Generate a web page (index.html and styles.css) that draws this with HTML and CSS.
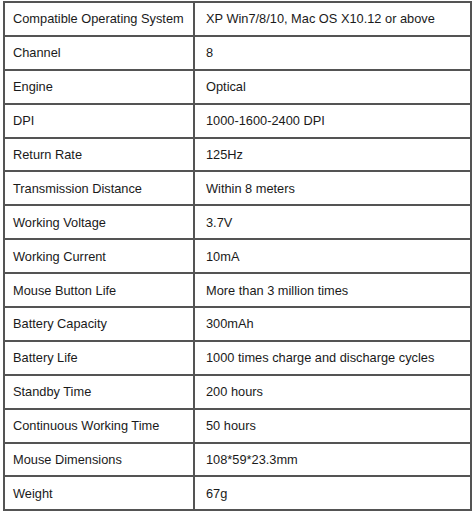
FILE: index.html
```html
<!DOCTYPE html>
<html>
<head>
<meta charset="utf-8">
<link rel="stylesheet" href="styles.css">
</head>
<body>
<div class="specs">
  <div class="cell key">Compatible Operating System</div><div class="cell val">XP Win7/8/10, Mac OS X10.12 or above</div>
  <div class="cell key">Channel</div><div class="cell val">8</div>
  <div class="cell key">Engine</div><div class="cell val">Optical</div>
  <div class="cell key">DPI</div><div class="cell val">1000-1600-2400 DPI</div>
  <div class="cell key">Return Rate</div><div class="cell val">125Hz</div>
  <div class="cell key">Transmission Distance</div><div class="cell val">Within 8 meters</div>
  <div class="cell key">Working Voltage</div><div class="cell val">3.7V</div>
  <div class="cell key">Working Current</div><div class="cell val">10mA</div>
  <div class="cell key">Mouse Button Life</div><div class="cell val">More than 3 million times</div>
  <div class="cell key">Battery Capacity</div><div class="cell val">300mAh</div>
  <div class="cell key">Battery Life</div><div class="cell val">1000 times charge and discharge cycles</div>
  <div class="cell key">Standby Time</div><div class="cell val">200 hours</div>
  <div class="cell key">Continuous Working Time</div><div class="cell val">50 hours</div>
  <div class="cell key">Mouse Dimensions</div><div class="cell val">108*59*23.3mm</div>
  <div class="cell key">Weight</div><div class="cell val">67g</div>
</div>
</body>
</html>
```
FILE: styles.css
```css
html, body {
  margin: 0;
  padding: 0;
  background: #ffffff;
}
body {
  padding: 1px 0 0 3px;
  font-family: "Liberation Sans", Arial, sans-serif;
  font-size: 12.8px;
  color: #1a1a1a;
}
.specs {
  display: grid;
  grid-template-columns: 188px 275px;
  grid-auto-rows: 31.9px;
  gap: 2px;
  padding: 2px;
  background: #545454;
  width: max-content;
}
.cell {
  background: #ffffff;
  display: flex;
  align-items: center;
  white-space: nowrap;
}
.key {
  padding-left: 8px;
}
.val {
  padding-left: 11px;
}
```
